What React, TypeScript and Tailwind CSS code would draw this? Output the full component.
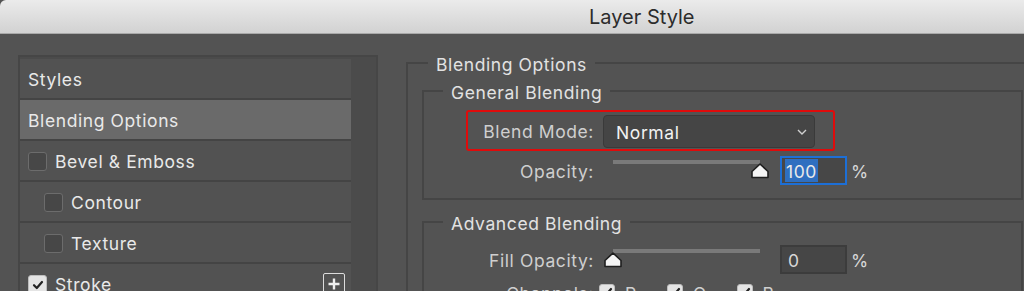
import React from 'react'

const font = { fontFamily: 'Inter, "Liberation Sans", sans-serif' }

const styleRows = [
  { name: 'Styles', indent: 0, check: null as null | boolean },
  { name: 'Blending Options', indent: 0, check: null as null | boolean, active: true },
  { name: 'Bevel & Emboss', indent: 0, check: false },
  { name: 'Contour', indent: 1, check: false },
  { name: 'Texture', indent: 1, check: false },
  { name: 'Stroke', indent: 0, check: true, plus: true },
]

function CheckBox({ checked, small }: { checked: boolean; small?: boolean }) {
  const size = small ? 'w-[16px] h-[16px]' : 'w-[19px] h-[19px]'
  if (checked) {
    return (
      <span className={`${size} shrink-0 rounded-[3px] bg-[#e4e4e4] border border-[#bdbdbd] flex items-center justify-center`}>
        <svg width="12" height="12" viewBox="0 0 12 12">
          <path d="M2 6.2 L4.8 9 L10 3" fill="none" stroke="#222" strokeWidth="2.2" strokeLinecap="round" strokeLinejoin="round" />
        </svg>
      </span>
    )
  }
  return <span className={`${size} block shrink-0 rounded-[3px] bg-[#474747] border-[1.5px] border-[#6c6c6c]`} />
}

function Thumb() {
  return (
    <svg width="20" height="18" viewBox="0 0 20 18">
      <path d="M2 15.5 L2 9.5 L10 2 L18 9.5 L18 15.5 Z" fill="#f4f4f4" stroke="#1e1e1e" strokeWidth="1.6" strokeLinejoin="round" />
    </svg>
  )
}

function Slider({ value }: { value: number }) {
  return (
    <div className="relative w-[167px] h-[29px] ml-[9px] shrink-0">
      <div className="absolute left-[10px] right-[10px] top-[4px] h-[4px] bg-[#7a7a7a]" />
      <div className="absolute top-[6px]" style={{ left: `${value * 1.47}px` }}>
        <Thumb />
      </div>
    </div>
  )
}

// Inter sits a little high in its line box, so row texts get a small top pad
const txt = 'text-[17.5px] tracking-[0.6px]'
const rowTxt = `${txt} pt-[4px]`
const legendCls = `px-[8px] ${txt} h-[20px] leading-[24px] text-[#e2e2e2]`

export default function App() {
  return (
    <div className="w-[1024px] h-[291px] overflow-hidden bg-[#535353]" style={font}>
      <div className="h-[34px] rounded-tl-[6px] bg-gradient-to-b from-[#ebebeb] to-[#d2d2d2] border-b border-[#a9a9a9] flex items-center pl-[589px]">
        <span className="text-[20px] text-[#2c2c2c]">Layer Style</span>
      </div>

      <div className="flex items-start">
        {/* left style list */}
        <div className="shrink-0 ml-[18px] mt-[21px] w-[360px] border-2 border-[#464646] bg-[#4b4b4b] pt-[2px] flex">
          <div className="w-[331px] bg-[#535353]">
            {styleRows.map((row) => (
              <div
                key={row.name}
                className={`h-[41px] border-b-2 border-[#444444] flex items-center pr-[6px] ${
                  row.active ? 'bg-[#6a6a6a]' : 'bg-[#525252]'
                } ${row.indent ? 'pl-[24px]' : 'pl-[8px]'}`}
              >
                {row.check !== null && (
                  <span className="mr-[8px] mt-[2px]">
                    <CheckBox checked={row.check} />
                  </span>
                )}
                <span className={`${rowTxt} text-[#e9e9e9]`}>{row.name}</span>
                {row.plus && (
                  <span className="ml-auto w-[22px] h-[22px] border-[1.5px] border-[#dcdcdc] rounded-[2px] flex items-center justify-center">
                    <svg width="14" height="14" viewBox="0 0 14 14">
                      <path d="M7 1.5 V12.5 M1.5 7 H12.5" stroke="#f0f0f0" strokeWidth="2.4" />
                    </svg>
                  </span>
                )}
              </div>
            ))}
          </div>
        </div>

        {/* right options */}
        <fieldset className="shrink-0 ml-[28px] mt-[19px] w-[700px] border-2 border-[#454545] pl-[14px] pt-[8px]">
          <legend className={`ml-[6px] ${legendCls}`}>Blending Options</legend>

          <fieldset className="w-[601px] border-2 border-[#454545] pb-[13px]">
            <legend className={`ml-[19px] ${legendCls}`}>General Blending</legend>

            <div className="ml-[42px] mt-[9px] w-[369px] h-[41px] border-2 border-[#e00b0b] rounded-[3px] flex items-center pr-[18px]">
              <span className={`w-[126px] text-right ${rowTxt} text-[#cfcfcf]`}>Blend Mode:</span>
              <div className="ml-[9px] w-[212px] h-[33px] bg-[#454545] border border-[#3a3a3a] rounded-[4px] flex items-center pl-[12px] pr-[6px] mt-[2px]">
                <span className={`${rowTxt} text-[#f2f2f2]`}>Normal</span>
                <svg className="ml-auto" width="12" height="8" viewBox="0 0 12 8">
                  <path d="M2 2 L6 6 L10 2" fill="none" stroke="#d0d0d0" strokeWidth="1.4" />
                </svg>
              </div>
            </div>

            <div className="mt-[5px] flex items-center h-[29px]">
              <span className={`w-[170px] text-right ${rowTxt} text-[#cfcfcf]`}>Opacity:</span>
              <Slider value={100} />
              <div className="ml-[10px] w-[67px] h-[29px] bg-[#474747] border-2 border-[#1d6fd6] flex items-center pl-[3px]">
                <span className={`bg-[#2f6fc0] ${txt} h-[23px] pt-[2px] leading-[21px] text-[#eaeaea] px-[1px]`}>100</span>
              </div>
              <span className={`ml-[4px] ${rowTxt} text-[#d8d8d8]`}>%</span>
            </div>
          </fieldset>

          <fieldset className="mt-[12px] w-[601px] border-2 border-[#454545] pb-[13px]">
            <legend className={`ml-[19px] ${legendCls}`}>Advanced Blending</legend>

            <div className="mt-[13px] flex items-center h-[29px]">
              <span className={`w-[170px] text-right ${rowTxt} text-[#cfcfcf]`}>Fill Opacity:</span>
              <Slider value={0} />
              <div className="ml-[10px] w-[67px] h-[29px] bg-[#464646] border-2 border-[#3c3c3c] flex items-center pl-[6px]">
                <span className={`${rowTxt} text-[#d8d8d8]`}>0</span>
              </div>
              <span className={`ml-[4px] ${rowTxt} text-[#d8d8d8]`}>%</span>
            </div>

            <div className="mt-[8px] flex items-center h-[20px]">
              <span className={`w-[170px] text-right ${rowTxt} text-[#cfcfcf]`}>Channels:</span>
              <div className="ml-[5px] flex items-center gap-[10px]">
                <CheckBox checked small />
                <span className={`${rowTxt} text-[#cfcfcf] mr-[30px]`}>R</span>
              </div>
              <div className="flex items-center gap-[10px]">
                <CheckBox checked small />
                <span className={`${rowTxt} text-[#cfcfcf] mr-[30px]`}>G</span>
              </div>
              <div className="flex items-center gap-[10px]">
                <CheckBox checked small />
                <span className={`${rowTxt} text-[#cfcfcf]`}>B</span>
              </div>
            </div>
          </fieldset>
        </fieldset>
      </div>
    </div>
  )
}
